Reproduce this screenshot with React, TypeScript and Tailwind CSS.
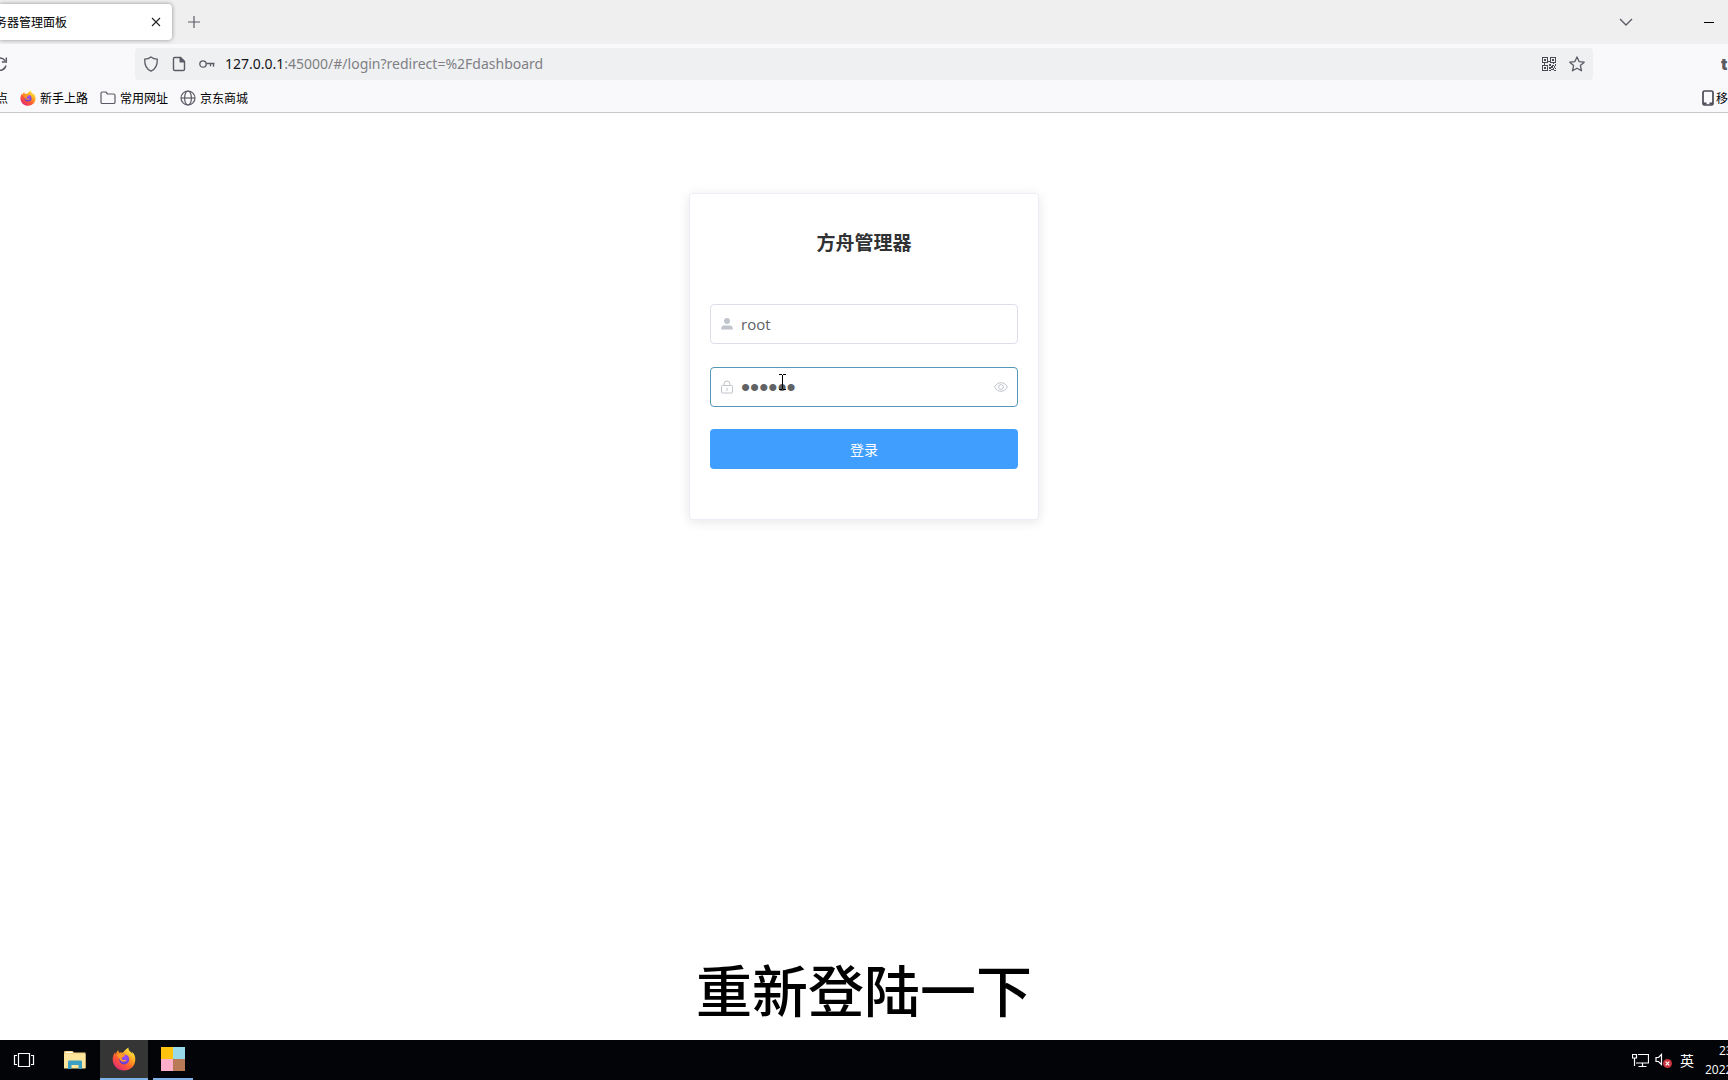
import React, { useState } from "react";

const ICON = "#5b5b66";

function FirefoxLogo({ className, id }: { className: string; id: string }) {
  return (
    <svg viewBox="0 0 24 24" className={className} aria-hidden="true">
      <defs>
        <linearGradient id={`${id}-body`} x1="0.85" y1="0.1" x2="0.2" y2="0.95">
          <stop offset="0" stopColor="#fff04a" />
          <stop offset="0.35" stopColor="#ffa01f" />
          <stop offset="0.65" stopColor="#ff5733" />
          <stop offset="1" stopColor="#e02a78" />
        </linearGradient>
        <radialGradient id={`${id}-core`} cx="0.6" cy="0.3" r="0.8">
          <stop offset="0" stopColor="#a04dff" />
          <stop offset="1" stopColor="#5a3ccf" />
        </radialGradient>
      </defs>
      <path
        fill={`url(#${id}-body)`}
        d="M16.500.4c-.3 1.800.4 2.900 1.700 4.100.9.700 1.600 1.400 2.100 2.300.1-.7 0-1.400-.2-2 2.300 2.200 3.300 5 3.200 8C23.100 19.200 18.200 23.600 12 23.600 5.600 23.600.7 18.700.7 12.600c0-2.900.8-5.200 2.400-7.300.1 1 .3 1.600.7 2.200.3-1.800 1.200-3.300 2.600-4.500-.1 1.200.2 2 .8 2.700 1.200-.4 2.400-.3 3.500.1C11.700 5 13.300 2 16.500.4z"
      />
      <circle cx="12.200" cy="12.400" r="5" fill={`url(#${id}-core)`} />
      <path
        fill="#ff9a28"
        d="M4.500 8.600c1.700-1.600 4.200-2 6-1 .9 0 1.900.1 2.800.4-.7 1.900-3 1.700-3.500 3.200-.2 1.300 1.300 1.900 2.600 1.800 1 0 1.700-.5 2.400-.2-.6 1.700-2.800 2.300-4.700 1.700C7.100 13.500 7.500 9.500 4.500 8.600z"
      />
    </svg>
  );
}

function TabStrip() {
  return (
    <div className="flex h-11 items-center bg-[#efefef]">
      <div className="flex h-9 w-[172px] shrink-0 items-center justify-between rounded-r bg-white pr-2 shadow-[0_0_4px_rgba(0,0,0,0.4)]">
        <span className="flex w-[67px] justify-end overflow-hidden text-xs whitespace-nowrap">
          服务器管理面板
        </span>
        <button type="button" aria-label="关闭标签页" className="flex size-4 items-center justify-center">
          <svg viewBox="0 0 10 10" className="size-[10px]" fill="none" stroke="#222" strokeWidth="1.100">
            <path d="M1 1l8 8M9 1l-8 8" />
          </svg>
        </button>
      </div>
      <button type="button" aria-label="新建标签页" className="ml-[14px] flex size-4 items-center justify-center">
        <svg viewBox="0 0 12 12" className="size-3" fill="none" stroke={ICON} strokeWidth="1.200">
          <path d="M6 0v12M0 6h12" />
        </svg>
      </button>
      <div className="ml-auto flex items-center gap-[70px]">
        <button type="button" aria-label="列出所有标签页" className="flex h-4 w-4 items-center justify-center">
          <svg viewBox="0 0 14 8" className="h-2 w-[14px] shrink-0" fill="none" stroke={ICON} strokeWidth="1.400">
            <path d="M1 1l6 6 6-6" />
          </svg>
        </button>
        <button type="button" aria-label="最小化" className="flex h-4 w-6 items-center">
          <span className="h-px w-[10px] bg-black" />
        </button>
      </div>
    </div>
  );
}

function QrIcon() {
  return (
    <svg viewBox="0 0 14 14" className="size-[14px]" fill="#4a4a55" shapeRendering="crispEdges" aria-hidden="true">
      <path
        fillRule="evenodd"
        d="M0 0h6v6H0zM1 1v4h4V1zM8 0h6v6H8zM9 1v4h4V1zM0 8h6v6H0zM1 9v4h4V9zM2 2h2v2H2zM10 2h2v2h-2zM2 10h2v2H2zM6 4h2v1H6zM2 6h1v2H2zM11 6h1v1h-1zM7 7h2v2H7zM10 8h2v1h-2zM13 7h1v2h-1zM9 9h2v2H9zM12 9h1v2h-1zM7 10h2v2H7zM11 11h1v2h-1zM13 11h1v1h-1zM9 12h2v1H9zM7 13h2v1H7zM12 13h2v1h-2z"
      />
    </svg>
  );
}

function AddressBar() {
  return (
    <div className="flex h-10 items-center bg-[#f9f9fb]">
      <button type="button" aria-label="重新载入" className="flex h-8 w-2 shrink-0 items-center justify-end">
        <svg viewBox="0 0 16 16" className="size-4 shrink-0" fill="none" stroke={ICON} strokeWidth="1.500">
          <path d="M13.200 4.800A6.200 6.200 0 1 0 14 9.500" />
          <path d="M14.300 1.500v4.500H9.800" />
        </svg>
      </button>
      <div className="ml-[127px] flex h-8 flex-1 items-center rounded bg-[#eff0f2] pr-2 pl-2">
        <svg viewBox="0 0 16 16" className="size-4 shrink-0" fill="none" stroke={ICON} strokeWidth="1.300" strokeLinejoin="round" aria-hidden="true">
          <path d="M8 .9c1.800 1.500 4 2.200 6.300 2.300C14.500 8.500 12.800 13 8 15.200 3.200 13 1.500 8.500 1.700 3.200 4 3.100 6.200 2.400 8 .9z" />
        </svg>
        <svg viewBox="0 0 16 16" className="ml-3 size-4 shrink-0" fill="none" stroke={ICON} strokeWidth="1.400" strokeLinejoin="round" aria-hidden="true">
          <path d="M3.500 1.500h6l4 4v7.700c0 .7-.5 1.300-1.300 1.300H3.800c-.8 0-1.300-.6-1.300-1.300V2.500c0-.6.400-1 1-1z" />
          <path d="M9.200 1.500v4.300h4.300z" fill={ICON} />
        </svg>
        <svg viewBox="0 0 16 16" className="ml-3 size-4 shrink-0" fill="none" stroke={ICON} strokeWidth="1.300" aria-hidden="true">
          <circle cx="4" cy="8" r="3.200" />
          <path d="M7.200 7.500h8.300M11.500 7.500v2.800M14.500 7.500v3.300" />
        </svg>
        <div className="ml-[10px] flex-1 font-['Noto_Sans','Noto_Sans_CJK_SC',sans-serif] text-sm leading-5 whitespace-nowrap text-[#7f7f85]">
          <span className="text-[#15141a]">127.0.0.1</span>:45000/#/login?redirect=%2Fdashboard
        </div>
        <div className="flex items-center gap-3">
          <button type="button" aria-label="二维码" className="flex size-4 items-center justify-center">
            <QrIcon />
          </button>
          <button type="button" aria-label="添加书签" className="flex size-4 items-center justify-center">
            <svg viewBox="0 0 16 16" className="size-4" fill="none" stroke={ICON} strokeWidth="1.300" strokeLinejoin="round">
              <path d="M8 .9l2.100 4.700 5.100.6-3.800 3.400 1.100 5.200L8 12.200l-4.500 2.600 1.100-5.200L.8 6.200l5.100-.6z" />
            </svg>
          </button>
        </div>
      </div>
      <div className="ml-32 w-[7px] shrink-0 overflow-hidden font-['Inter','Noto_Sans_CJK_SC',sans-serif] text-base leading-5 font-black text-[#5b5b5f]">
        t
      </div>
    </div>
  );
}

function BookmarksBar() {
  return (
    <nav className="flex h-[29px] items-center overflow-hidden border-b border-[#c9c9cc] bg-[#f9f9fb] text-xs whitespace-nowrap">
      <a href="#hot" className="flex w-2 shrink-0 justify-end overflow-hidden">
        火狐官方站点
      </a>
      <a href="#start" className="ml-3 flex items-center gap-1">
        <FirefoxLogo id="bookmark" className="size-4" />
        新手上路
      </a>
      <a href="#common" className="ml-3 flex items-center gap-1">
        <svg viewBox="0 0 16 16" className="size-4" fill="none" stroke={ICON} strokeWidth="1.200" strokeLinejoin="round" aria-hidden="true">
          <path d="M1 3.300c0-.8.500-1.300 1.300-1.300h3.500l1.800 2h6c.8 0 1.400.6 1.400 1.400v6.800c0 .8-.6 1.300-1.400 1.300H2.300c-.8 0-1.300-.5-1.300-1.300z" />
        </svg>
        常用网址
      </a>
      <a href="#jd" className="ml-3 flex items-center gap-1">
        <svg viewBox="0 0 16 16" className="size-4" fill="none" stroke={ICON} strokeWidth="1.200" aria-hidden="true">
          <circle cx="8" cy="8" r="7" />
          <ellipse cx="8" cy="8" rx="3.400" ry="7" />
          <path d="M1 8h14" />
        </svg>
        京东商城
      </a>
      <a href="#mobile" className="ml-auto flex w-[26px] items-center gap-[2px] overflow-hidden">
        <svg viewBox="0 0 12 16" className="h-4 w-3 shrink-0" fill="none" stroke="#4a4a55" strokeWidth="1.700" aria-hidden="true">
          <rect x="1" y="1" width="10" height="14" rx="1.500" />
          <path d="M1 13.500h3.500M7.500 13.500H11" strokeWidth="2" />
        </svg>
        移动版书签
      </a>
    </nav>
  );
}

function LoginCard() {
  const [user, setUser] = useState("root");
  const [password, setPassword] = useState("123456");
  return (
    <form
      onSubmit={(e: React.FormEvent) => e.preventDefault()}
      className="mx-auto mt-20 w-[350px] rounded border border-[#ebeef5] bg-white px-5 pt-8 pb-[50px] shadow-[0_2px_12px_rgba(0,0,0,0.1)]"
    >
      <h1 className="text-center text-[19px] leading-8 font-bold text-[#303133]">方舟管理器</h1>
      <label className="mt-[46px] flex h-10 items-center rounded border border-[#dcdfe6] px-[9px]">
        <svg viewBox="0 0 14 14" className="size-[14px] shrink-0" fill="#c0c4cc" aria-label="用户名">
          <circle cx="7" cy="4" r="3" />
          <path d="M1.300 12.500v-1.200c0-1.600 1-2.800 2.700-2.800h6c1.700 0 2.700 1.200 2.700 2.800v1.200z" />
        </svg>
        <input
          type="text"
          value={user}
          onChange={(e) => setUser(e.target.value)}
          className="ml-[7px] min-w-0 flex-1 bg-transparent font-['Open_Sans','Noto_Sans_CJK_SC',sans-serif] text-[15px] text-[#606266] outline-none"
        />
      </label>
      <div className="relative mt-[23px]">
        <label className="flex h-10 items-center rounded border border-[#5497b8] px-[9px]">
          <svg viewBox="0 0 14 14" className="size-[14px] shrink-0" fill="none" stroke="#c0c4cc" aria-label="密码">
            <rect x="1.500" y="5.500" width="11" height="7.500" rx="1" />
            <path d="M4 5.500V4a3 3 0 0 1 6 0v1.500M7 8v3" />
          </svg>
          <input
            type="password"
            value={password}
            onChange={(e) => setPassword(e.target.value)}
            className="ml-[7px] h-8 min-w-0 flex-1 bg-transparent font-['Liberation_Sans',sans-serif] text-[26px] text-[#606266] outline-none"
          />
          <svg viewBox="0 0 14 14" className="size-[14px] shrink-0" fill="none" stroke="#c0c4cc" aria-hidden="true">
            <path d="M.6 7C2 4.200 4.300 2.700 7 2.700S12 4.200 13.400 7C12 9.800 9.700 11.300 7 11.300S2 9.800.6 7z" />
            <circle cx="7" cy="7" r="2.400" />
          </svg>
        </label>
        <svg viewBox="0 0 7 16" className="absolute top-[7px] left-[69px] h-4 w-[7px]" fill="none" stroke="#000" shapeRendering="crispEdges" aria-hidden="true">
          <path d="M0 .5h3M4 .5h3M3.500 1v14M0 15.500h3M4 15.500h3" />
        </svg>
      </div>
      <button type="submit" className="mt-[22px] h-10 w-full rounded bg-[#409eff] text-sm text-white">
        登录
      </button>
    </form>
  );
}

function Taskbar() {
  return (
    <footer className="flex h-10 items-center overflow-hidden bg-[#020408] text-white">
      <button type="button" aria-label="任务视图" className="ml-[13px] flex h-10 w-[22px] items-center justify-center">
        <svg viewBox="0 0 22 16" className="h-4 w-[22px]" fill="none" stroke="#fff" strokeWidth="1.200" aria-hidden="true">
          <path d="M5.500 1.500h11v13h-11zM4 3.500H1.500v9H4M18 3.500h2.500v9H18" />
        </svg>
      </button>
      <button type="button" aria-label="文件资源管理器" className="ml-[18px] flex h-10 w-11 items-center justify-center">
        <svg viewBox="0 0 22 20" className="h-5 w-[22px]" aria-hidden="true">
          <path d="M0 2.500C0 1.500.5 1 1.500 1h7L10 2.500h11.500V18H0z" fill="#f3d58a" />
          <path d="M0 4h21.500v14.500H0z" fill="#fde69b" />
          <path d="M2 2h6.500v1H2z" fill="#fff" />
          <path d="M4 19v-7c0-1 .5-1.500 1.500-1.500h11c1 0 1.500.5 1.500 1.500v7h-3.500v-4h-7v4z" fill="#3d9fc4" />
        </svg>
      </button>
      <button type="button" aria-label="Firefox" className="ml-[3px] flex h-10 w-12 items-center justify-center border-b-2 border-[#7fb2e6] bg-[#353535]">
        <FirefoxLogo id="taskbar" className="size-6" />
      </button>
      <button type="button" aria-label="服务器程序" className="ml-[5px] flex h-10 w-10 items-center justify-center border-b-2 border-[#7fb2e6]">
        <span className="grid size-6 grid-cols-2">
          <span className="bg-[#ffc20e]" />
          <span className="bg-[#99d9ea]" />
          <span className="bg-[#ffaec9]" />
          <span className="bg-[#b97a57]" />
        </span>
      </button>
      <div className="ml-auto flex items-center">
        <svg viewBox="0 0 17 15" className="h-[15px] w-[17px]" fill="none" stroke="#fff" strokeWidth="1.200" aria-hidden="true">
          <path d="M6 1.500h10.500v8.500H4M10.500 10v3.500M6.500 13.500h8M.5 1.500h4v3.500h-4zM2.500 5v8" />
        </svg>
        <svg viewBox="0 0 17 16" className="ml-[6px] h-4 w-[17px]" fill="none" aria-hidden="true">
          <path d="M1 5.500h2.500L6.500 2.500v10L3.500 9.500H1z" stroke="#fff" strokeWidth="1.200" />
          <circle cx="12.500" cy="11.500" r="4.500" fill="#c9353d" />
          <path d="M10.700 9.700l3.600 3.600M14.300 9.700l-3.600 3.600" stroke="#fff" strokeWidth="1.200" />
        </svg>
        <span className="ml-2 text-sm leading-5">英</span>
        <div className="ml-[11px] flex w-[23px] flex-col overflow-hidden font-['Open_Sans','Noto_Sans_CJK_SC',sans-serif] text-xs leading-[19px]">
          <span className="pl-[14px]">23</span>
          <span>2022</span>
        </div>
      </div>
    </footer>
  );
}

export default function App() {
  return (
    <div className="flex min-h-screen flex-col overflow-hidden bg-white font-['Noto_Sans_CJK_SC',sans-serif] text-black">
      <header>
        <TabStrip />
        <AddressBar />
        <BookmarksBar />
      </header>
      <main className="flex flex-1 flex-col">
        <LoginCard />
        <p className="mt-auto pb-3 text-center text-[56px] leading-[80px] font-medium">重新登陆一下</p>
      </main>
      <Taskbar />
    </div>
  );
}
